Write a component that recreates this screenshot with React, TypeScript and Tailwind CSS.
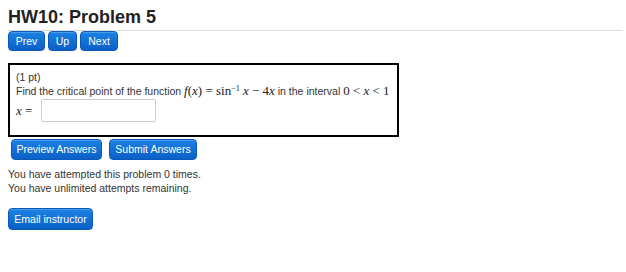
import React from 'react';

const btn =
  'rounded-[4px] border border-[#0a58b8] bg-gradient-to-b from-[#1b82e2] to-[#0b60c8] text-white text-[10.5px] leading-none shadow-[inset_0_1px_0_rgba(255,255,255,0.2)]';

function M({ children }: { children: React.ReactNode }) {
  return <span className="font-['Liberation_Serif',serif] text-[13px] text-[#222]">{children}</span>;
}

export default function App() {
  return (
    <div className="w-[626px] h-[272px] bg-white font-['Liberation_Sans',Arial,sans-serif] text-[#333]">
      <div className="pl-2 pt-[6px]">
        <h2 className="w-[614px] border-b border-[#ddd] text-[18px] font-bold leading-[22px] pb-[2px] text-[#222]">
          HW10: Problem 5
        </h2>
        <div className="flex gap-[3px]">
          <button className={`${btn} w-[37px] h-[20px]`}>Prev</button>
          <button className={`${btn} w-[29px] h-[20px]`}>Up</button>
          <button className={`${btn} w-[38px] h-[20px]`}>Next</button>
        </div>

        <div className="mt-[12px] w-[391px] h-[74px] border-2 border-black px-[6px] pt-[5px] text-[10.5px] leading-[14px]">
          <div>(1 pt)</div>
          <div className="flex items-baseline whitespace-nowrap">
            <span>Find the critical point of the function&nbsp;</span>
            <M>
              <i>f</i>(<i>x</i>) = sin<sup className="text-[8px]">−1</sup> <i>x</i> − 4<i>x</i>
            </M>
            <span>&nbsp;in the interval&nbsp;</span>
            <M>
              0 &lt; <i>x</i> &lt; 1
            </M>
          </div>
          <div className="flex items-center mt-[1px]">
            <M>
              <i>x</i> =
            </M>
            <div className="ml-[9px] w-[115px] h-[23px] border border-[#ccc] rounded-[2px] bg-white" />
          </div>
        </div>

        <div className="flex gap-[7px] ml-[3px] mt-[2px]">
          <button className={`${btn} w-[91px] h-[21px]`}>Preview Answers</button>
          <button className={`${btn} w-[88px] h-[21px]`}>Submit Answers</button>
        </div>

        <div className="mt-[7px] text-[10.5px] leading-[14px]">
          <div>You have attempted this problem 0 times.</div>
          <div>You have unlimited attempts remaining.</div>
        </div>

        <button className={`${btn} mt-[13px] w-[85px] h-[22px]`}>Email instructor</button>
      </div>
    </div>
  );
}
